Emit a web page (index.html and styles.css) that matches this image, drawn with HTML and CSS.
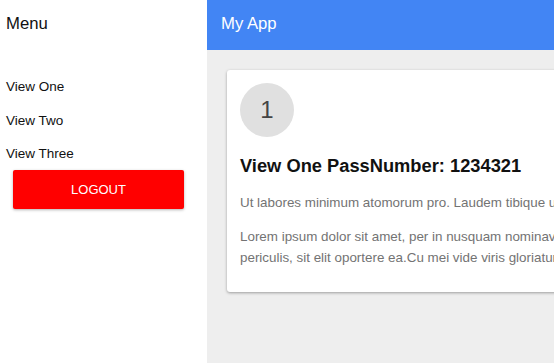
FILE: index.html
```html
<!DOCTYPE html>
<html>
<head>
<meta charset="utf-8">
<link rel="stylesheet" href="styles.css">
</head>
<body>
<div class="app">
  <aside class="sidebar">
    <div class="menu-title">Menu</div>
    <nav class="nav">
      <a class="nav-item">View One</a>
      <a class="nav-item">View Two</a>
      <a class="nav-item">View Three</a>
    </nav>
    <button class="logout">LOGOUT</button>
  </aside>
  <div class="main">
    <header class="header">My App</header>
    <div class="content">
      <div class="card">
        <div class="circle">1</div>
        <h2 class="title">View One PassNumber: 1234321</h2>
        <p class="text">Ut labores minimum atomorum pro. Laudem tibique ut has.</p>
        <p class="text">Lorem ipsum dolor sit amet, per in nusquam nominavi periculis, sit elit oportere ea.Lorem ipsum dolor sit amet, per in nusquam nominavi periculis, sit elit oportere ea.Cu mei vide viris gloriatur, at populo eripuit sit.</p>
      </div>
    </div>
  </div>
</div>
</body>
</html>
```
FILE: styles.css
```css
html, body {
  margin: 0;
  padding: 0;
  height: 100%;
  overflow: hidden;
}
body {
  font-family: "Liberation Sans", Arial, sans-serif;
  background: #fff;
}
.app {
  display: flex;
  height: 100%;
}
.sidebar {
  width: 207px;
  flex: none;
  background: #fff;
  display: flex;
  flex-direction: column;
}
.menu-title {
  font-size: 16.7px;
  color: #111;
  padding: 14px 6px 0;
  height: 36px;
}
.nav {
  display: flex;
  flex-direction: column;
  padding-top: 29px;
}
.nav-item {
  font-size: 13.5px;
  color: #111;
  padding: 0 6px;
  line-height: 16px;
  height: 33.5px;
}
.logout {
  margin: -10px 0 0 13px;
  width: 171px;
  height: 39px;
  background: #ff0000;
  color: #fff;
  border: none;
  border-radius: 2px;
  font-family: "Liberation Sans", Arial, sans-serif;
  font-size: 13px;
  box-shadow: 0 1px 3px rgba(0,0,0,0.3);
  padding: 0;
}
.main {
  flex: 1;
  min-width: 0;
  background: #eeeeee;
  display: flex;
  flex-direction: column;
  overflow: hidden;
}
.header {
  height: 50px;
  background: #4285f4;
  color: #fff;
  font-size: 16.7px;
  line-height: 48px;
  padding-left: 14px;
  flex: none;
}
.content {
  padding: 20px;
}
.card {
  width: 835px;
  background: #fff;
  border-radius: 3px;
  box-shadow: 0 1px 3px rgba(0,0,0,0.35);
  padding: 13px 13px 11px;
}
.circle {
  width: 54px;
  height: 54px;
  border-radius: 50%;
  background: #e0e0e0;
  color: #444;
  font-size: 24px;
  display: flex;
  align-items: center;
  justify-content: center;
}
.title {
  margin: 18px 0 16px;
  font-size: 18.3px;
  font-weight: bold;
  color: #111;
  line-height: 21px;
}
.text {
  margin: 0 0 13px;
  font-size: 13.4px;
  line-height: 21px;
  color: #737373;
}
```
